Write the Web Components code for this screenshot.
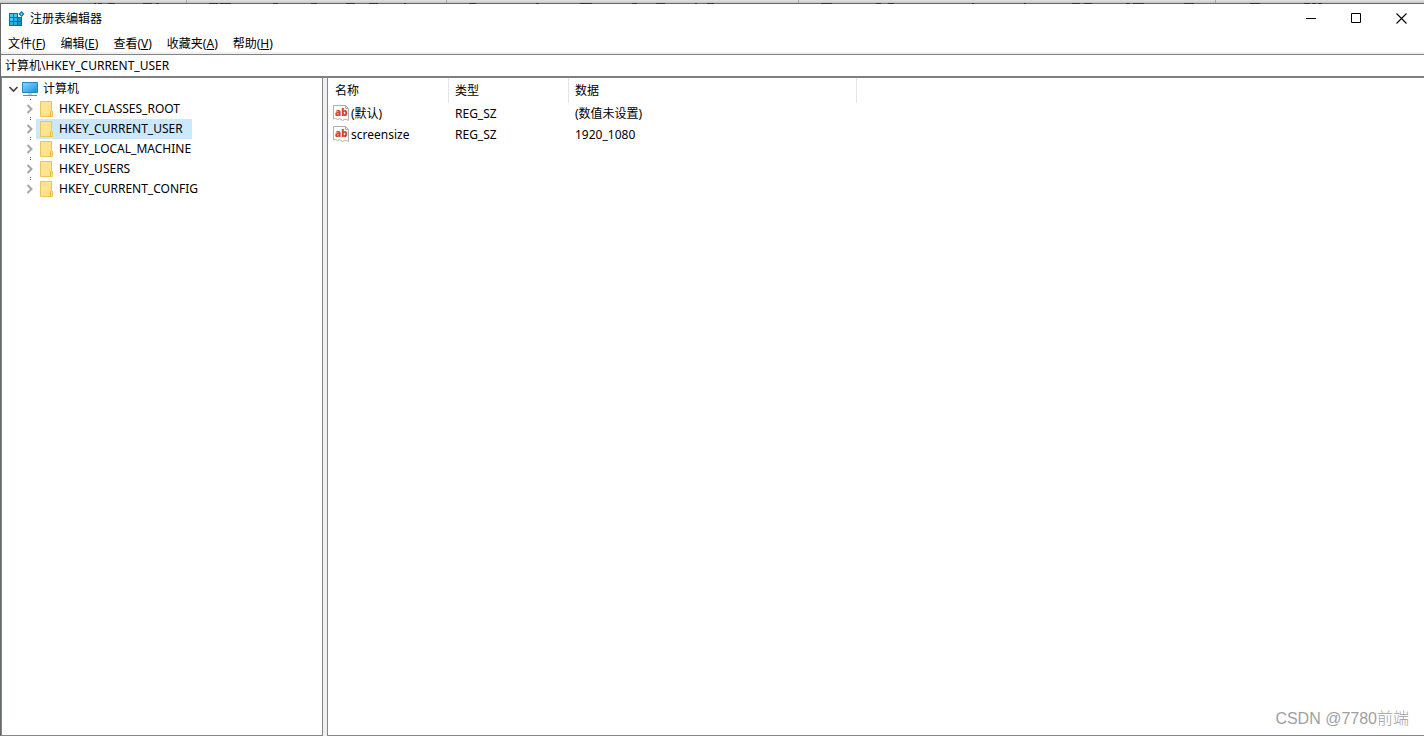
<!DOCTYPE html>
<html lang="zh-CN">
<head>
<meta charset="utf-8">
<title>注册表编辑器</title>
<style>
html, body {
  height: 100%;
  margin: 0;
}
body {
  font-family: "Noto Sans", "Noto Sans CJK SC", sans-serif;
  font-size: 12px;
  line-height: 20px;
  color: #000;
  background: #fff;
  overflow: hidden;
}
</style>
</head>
<body>
<registry-editor>
  <title-bar slot="title">注册表编辑器</title-bar>
  <menu-bar slot="menu">
    <menu-entry key="F">文件</menu-entry>
    <menu-entry key="E">编辑</menu-entry>
    <menu-entry key="V">查看</menu-entry>
    <menu-entry key="A">收藏夹</menu-entry>
    <menu-entry key="H">帮助</menu-entry>
  </menu-bar>
  <address-bar slot="address" value="计算机\HKEY_CURRENT_USER"></address-bar>
  <key-tree slot="tree" label="计算机">
    <key-item>HKEY_CLASSES_ROOT</key-item>
    <key-item selected>HKEY_CURRENT_USER</key-item>
    <key-item>HKEY_LOCAL_MACHINE</key-item>
    <key-item>HKEY_USERS</key-item>
    <key-item>HKEY_CURRENT_CONFIG</key-item>
  </key-tree>
  <value-list slot="values"></value-list>
  <water-mark slot="mark">CSDN @7780前端</water-mark>
</registry-editor>

<script>
const reset = `
  * { box-sizing: border-box; }
  button {
    all: unset;
    box-sizing: border-box;
    cursor: default;
  }
  svg { display: block; flex: none; }
`;

function define(name, html, setup) {
  const template = document.createElement("template");
  template.innerHTML = html;
  customElements.define(name, class extends HTMLElement {
    constructor() {
      super();
      this.attachShadow({ mode: "open" });
      this.shadowRoot.appendChild(template.content.cloneNode(true));
    }
    connectedCallback() {
      if (setup) setup(this, this.shadowRoot);
    }
  });
}

define("registry-editor", `
<style>
${reset}
:host {
  display: flex;
  flex-direction: column;
  height: 100vh;
  position: relative;
}
/* edge of the window underneath */
.behind {
  flex: none;
  height: 4px;
  overflow: hidden;
  background: linear-gradient(#dcdcdc 0 1px, #d0d0d0 2px, #bcbcbc 3px, #69696b 3px);
}
.window {
  flex: 1;
  min-height: 0;
  display: flex;
  flex-direction: column;
  border-left: 1px solid #69696b;
}
.panes {
  flex: 1;
  min-height: 0;
  display: grid;
  grid-template-columns: 322px 1fr;
  column-gap: 4px;
  background: #f0f0f0;
}
.pane {
  min-width: 0;
  background: #fff;
  border: 1px solid #828790;
  border-top: 0;
}
.pane:last-child { border-right: 0; }
</style>
<div class="behind">
  <svg width="1424" height="4">
    <path d="M186 0h1v3h-1zM446 0h1v3h-1zM798 0h1v3h-1zM1215 0h1v3h-1z" fill="#a8a8a8"/>
    <path d="M94 3h2v1h-2zM98 3h4v1h-4zM108 3h7v1h-7zM143 3h9v1h-9zM156 3h3v1h-3zM209 3h9v1h-9zM220 3h11v1h-11zM273 3h5v1h-5zM311 3h6v1h-6zM346 3h9v1h-9zM369 3h9v1h-9zM404 3h2v1h-2zM469 3h7v1h-7zM536 3h3v1h-3zM580 3h12v1h-12zM632 3h5v1h-5zM656 3h9v1h-9zM695 3h2v1h-2zM707 3h7v1h-7zM821 3h11v1h-11zM876 3h5v1h-5zM888 3h6v1h-6zM972 3h2v1h-2zM1024 3h2v1h-2zM1072 3h8v1h-8zM1084 3h8v1h-8zM1126 3h4v1h-4zM1133 3h11v1h-11zM1184 3h10v1h-10zM1250 3h10v1h-10zM1304 3h6v1h-6zM1312 3h4v1h-4zM1318 3h4v1h-4z" fill="#333"/>
  </svg>
</div>
<div class="window">
  <slot name="title"></slot>
  <slot name="menu"></slot>
  <slot name="address"></slot>
  <div class="panes">
    <div class="pane"><slot name="tree"></slot></div>
    <div class="pane"><slot name="values"></slot></div>
  </div>
</div>
<slot name="mark"></slot>
`);

define("title-bar", `
<style>
${reset}
:host {
  display: flex;
  align-items: center;
  height: 30px;
  padding-left: 8px;
}
.text { flex: 1; padding-left: 5px; }
button {
  width: 45px;
  height: 28px;
  align-self: flex-start;
  display: grid;
  place-items: center;
}
</style>
<svg width="16" height="16" viewBox="0 0 16 16">
  <path d="M0 2h9v4h4v9H0z" fill="#0a6fa8"/>
  <path d="M1 3h3v3H1zM5 3h3v3H5zM1 7h3v3H1z" fill="#3fc8f5"/>
  <path d="M5 7h3v3H5zM1 11h3v3H1zM5 11h3v3H5z" fill="#25b0e8"/>
  <path d="M9 7h3v3H9zM9 11h3v3H9z" fill="#0d94d2"/>
  <path d="M12.500 0L15.500 3L12.500 6L9.500 3z" fill="#0a6fa8"/>
  <path d="M12.500 1.500L14 3L12.500 4.500L11 3z" fill="#56c8ef"/>
</svg>
<span class="text"><slot></slot></span>
<button aria-label="最小化"><svg width="11" height="11"><path d="M0 5h10v1H0z"/></svg></button>
<button aria-label="最大化"><svg width="11" height="11"><path d="M.5.5h9v9h-9z" fill="none" stroke="#000"/></svg></button>
<button aria-label="关闭"><svg width="11" height="11"><path d="M.5.5l10 10M10.500.5l-10 10" stroke="#000" stroke-width="1.100"/></svg></button>
`);

define("menu-bar", `
<style>
:host {
  display: flex;
  gap: 15px;
  height: 20px;
  padding-left: 7px;
  border-bottom: 2px solid #f0f0f0;
  box-sizing: border-box;
}
</style>
<slot></slot>
`);

define("menu-entry", `
<style>
${reset}
:host { display: block; }
</style>
<button><slot></slot>(<u></u>)</button>
`, (host, root) => {
  root.querySelector("u").textContent = host.getAttribute("key");
});

define("address-bar", `
<style>
${reset}
:host {
  display: block;
  border-top: 1px solid #828282;
  border-bottom: 2px solid #808084;
}
input {
  display: block;
  width: 100%;
  height: 21px;
  padding: 0 4px 1px;
  border: 0;
  outline: 0;
  font: inherit;
  color: inherit;
  background: #fff;
}
</style>
<input type="text" aria-label="地址" spellcheck="false">
`, (host, root) => {
  root.querySelector("input").value = host.getAttribute("value");
});

define("key-tree", `
<style>
${reset}
:host { display: block; }
.root {
  display: flex;
  align-items: center;
  height: 21px;
  padding-left: 6px;
}
.text { padding-left: 4px; }
</style>
<button class="root" aria-expanded="true">
  <svg width="13" height="16"><path d="M1.500 6l4 4l4-4" fill="none" stroke="#404040" stroke-width="1.600"/></svg>
  <svg width="18" height="16" viewBox="0 0 18 16">
    <defs><linearGradient id="screen" x2="1" y2="1">
      <stop offset="0" stop-color="#8bd8ff"/><stop offset="1" stop-color="#168fdf"/>
    </linearGradient></defs>
    <path d="M1.500 1.500h15v10h-15z" fill="url(#screen)" stroke="#2786bd"/>
    <path d="M7 12h4v2H7z" fill="#c7d3db"/>
    <path d="M2 14h14v1H2z" fill="#6f8797"/>
  </svg>
  <span class="text"></span>
</button>
<slot></slot>
`, (host, root) => {
  root.querySelector(".text").textContent = host.getAttribute("label");
});

define("key-item", `
<style>
${reset}
:host {
  display: flex;
  height: 20px;
  padding-left: 20px;
}
button {
  display: flex;
  align-items: center;
  height: 20px;
  padding: 0 9px 0 4px;
}
.text { padding-left: 5px; }
:host([selected]) button { background: #cce8ff; }
:host(:last-of-type) .below { display: none; }
</style>
<svg width="14" height="20" viewBox="0 0 14 20">
  <path d="M5.500 6l4 4l-4 4" fill="none" stroke="#a6a6a6" stroke-width="2"/>
  <path d="M8 0h1v1H8z" fill="#606060"/>
  <path class="below" d="M8 18h1v1H8z" fill="#606060"/>
</svg>
<button>
  <svg width="14" height="16" viewBox="0 0 14 16">
    <path d="M.5.5h11v9l1 1v5H.5z" fill="#ffe391" stroke="#edc551"/>
    <path d="M10.500 15.500v-5h1" fill="none" stroke="#e5b93b"/>
  </svg>
  <span class="text"><slot></slot></span>
</button>
`);

define("value-list", `
<style>
${reset}
:host { display: block; }
table {
  table-layout: fixed;
  width: 100%;
  border-collapse: separate;
  border-spacing: 0;
}
.name { width: 121px; }
.type { width: 120px; }
.data { width: 288px; }
th {
  height: 25px;
  padding: 0 6px;
  font-weight: normal;
  text-align: left;
  border-right: 1px solid #e5e5e5;
}
th:first-child { padding-left: 7px; }
th:last-child { border: 0; }
td {
  height: 21px;
  padding: 0 6px;
  white-space: nowrap;
}
td:first-child { padding-left: 5px; }
.cell { display: flex; align-items: center; gap: 2px; }
</style>
<table>
  <thead>
    <tr><th class="name">名称</th><th class="type">类型</th><th class="data">数据</th><th></th></tr>
  </thead>
  <tbody></tbody>
</table>
<template>
  <tr>
    <td><div class="cell">
      <svg width="16" height="18" viewBox="0 0 16 18">
        <path d="M.5.5h12l3 3v12l-2-1h-2l-2 1l-3-2l-2 1l-2-1l-2 .5z" fill="#fff" stroke="#b0b0b0"/>
        <path d="M12.500.5v3h3" fill="none" stroke="#b0b0b0"/>
        <text x="2" y="11" font-family="Open Sans" font-size="10" font-weight="800" fill="#d24726">ab</text>
      </svg>
      <span></span>
    </div></td>
    <td></td>
    <td></td>
    <td></td>
  </tr>
</template>
`, (host, root) => {
  const values = [
    ["(默认)", "REG_SZ", "(数值未设置)"],
    ["screensize", "REG_SZ", "1920_1080"],
  ];
  const row = root.querySelector("template");
  values.forEach(([name, type, data]) => {
    const tr = row.content.cloneNode(true);
    const cells = tr.querySelectorAll("td");
    tr.querySelector("span").textContent = name;
    cells[1].textContent = type;
    cells[2].textContent = data;
    root.querySelector("tbody").appendChild(tr);
  });
});

// sits over the value pane
define("water-mark", `
<style>
:host {
  position: absolute;
  right: 15px;
  bottom: 5px;
  font-family: "Liberation Sans", "Noto Sans CJK SC", sans-serif;
  font-size: 16px;
  font-weight: 300;
  line-height: 24px;
  color: #a0a0a0;
}
</style>
<slot></slot>
`);
</script>
</body>
</html>
